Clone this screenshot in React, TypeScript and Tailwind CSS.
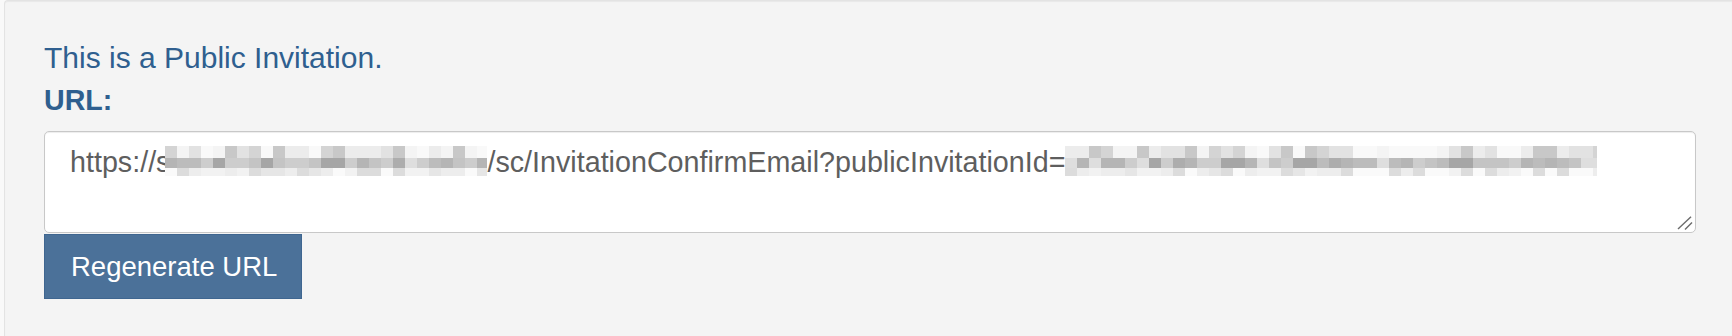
const TONES_TOP = [
  "bg-[#f4f4f4]",
  "bg-[#ececec]",
  "bg-[#e2e2e2]",
  "bg-[#d4d4d4]",
  "bg-[#c8c8c8]",
  "bg-[#f9f9f9]",
];

const TONES_MID = [
  "bg-[#adadad]",
  "bg-[#bcbcbc]",
  "bg-[#b5b5b5]",
  "bg-[#cdcdcd]",
  "bg-[#a6a6a6]",
  "bg-[#dedede]",
  "bg-[#c4c4c4]",
];

const TONES_LOW = [
  "bg-[#f2f2f2]",
  "bg-[#e6e6e6]",
  "bg-[#dcdcdc]",
  "bg-[#ededed]",
  "bg-[#fafafa]",
];

const ROWS = [
  { h: "h-[12px]", tones: TONES_TOP },
  { h: "h-[10px]", tones: TONES_MID },
  { h: "h-[8px]", tones: TONES_LOW },
];

// deterministic "noise" so the mosaic looks the same every render
function pick(seed: number, i: number, r: number, n: number) {
  const v = Math.sin(seed * 91.7 + i * 12.9898 + r * 78.233) * 43758.5453;
  return Math.floor((v - Math.floor(v)) * n);
}

function Mosaic({ cells, seed, widthClass }: { cells: number; seed: number; widthClass: string }) {
  return (
    <div className={`flex flex-col overflow-hidden shrink-0 mt-[4px] ${widthClass}`}>
      {ROWS.map((row, r) => (
        <div key={r} className={`flex ${row.h}`}>
          {Array.from({ length: cells }).map((_, i) => (
            <div key={i} className={`w-[12px] shrink-0 ${row.tones[pick(seed, i, r, row.tones.length)]}`} />
          ))}
        </div>
      ))}
    </div>
  );
}

export default function App() {
  return (
    <div className="w-[1732px] h-[336px] bg-[#f9f9f9] pl-[4px] overflow-hidden font-['Liberation_Sans',Arial,sans-serif]">
      <div className="h-[340px] bg-[#f4f4f4] border-l border-t border-[#e3e3e3] rounded-tl-[4px] shadow-[inset_0_1px_1px_rgba(0,0,0,0.05)] pl-[39px] pr-[36px] pt-[36px]">
        <div className="text-[30px] leading-[42px] text-[#2f5f8f]">This is a Public Invitation.</div>
        <div className="text-[28.6px] leading-[42px] font-bold text-[#2f5f8f]">URL:</div>

        <div className="relative mt-[10px] h-[102px] bg-white border border-[#c8c8c8] rounded-[5px] shadow-[inset_0_1px_1px_rgba(0,0,0,0.075)] pt-[10px] pl-[25px]">
          <div className="flex items-start h-[40px] text-[28.7px] leading-[40px] text-[#5e5e5e] whitespace-nowrap">
            <span>https://s</span>
            <div className="-ml-[5px]">
              <Mosaic cells={28} seed={3} widthClass="w-[322px]" />
            </div>
            <span>/sc/InvitationConfirmEmail?publicInvitationId=</span>
            <Mosaic cells={45} seed={7} widthClass="w-[532px]" />
          </div>
          <svg className="absolute right-[1px] bottom-[1px]" width="20" height="20" viewBox="0 0 20 20">
            <line x1="4" y1="18" x2="17" y2="5.7" stroke="#6a6a6a" strokeWidth="1.4" />
            <line x1="11" y1="18.5" x2="18" y2="11.5" stroke="#6a6a6a" strokeWidth="1.4" />
          </svg>
        </div>

        <button className="mt-px h-[65px] w-[258px] flex items-center pl-[26px] bg-[#4b7199] border border-[#3f6690] text-white text-[27.5px]">
          Regenerate URL
        </button>
      </div>
    </div>
  );
}
